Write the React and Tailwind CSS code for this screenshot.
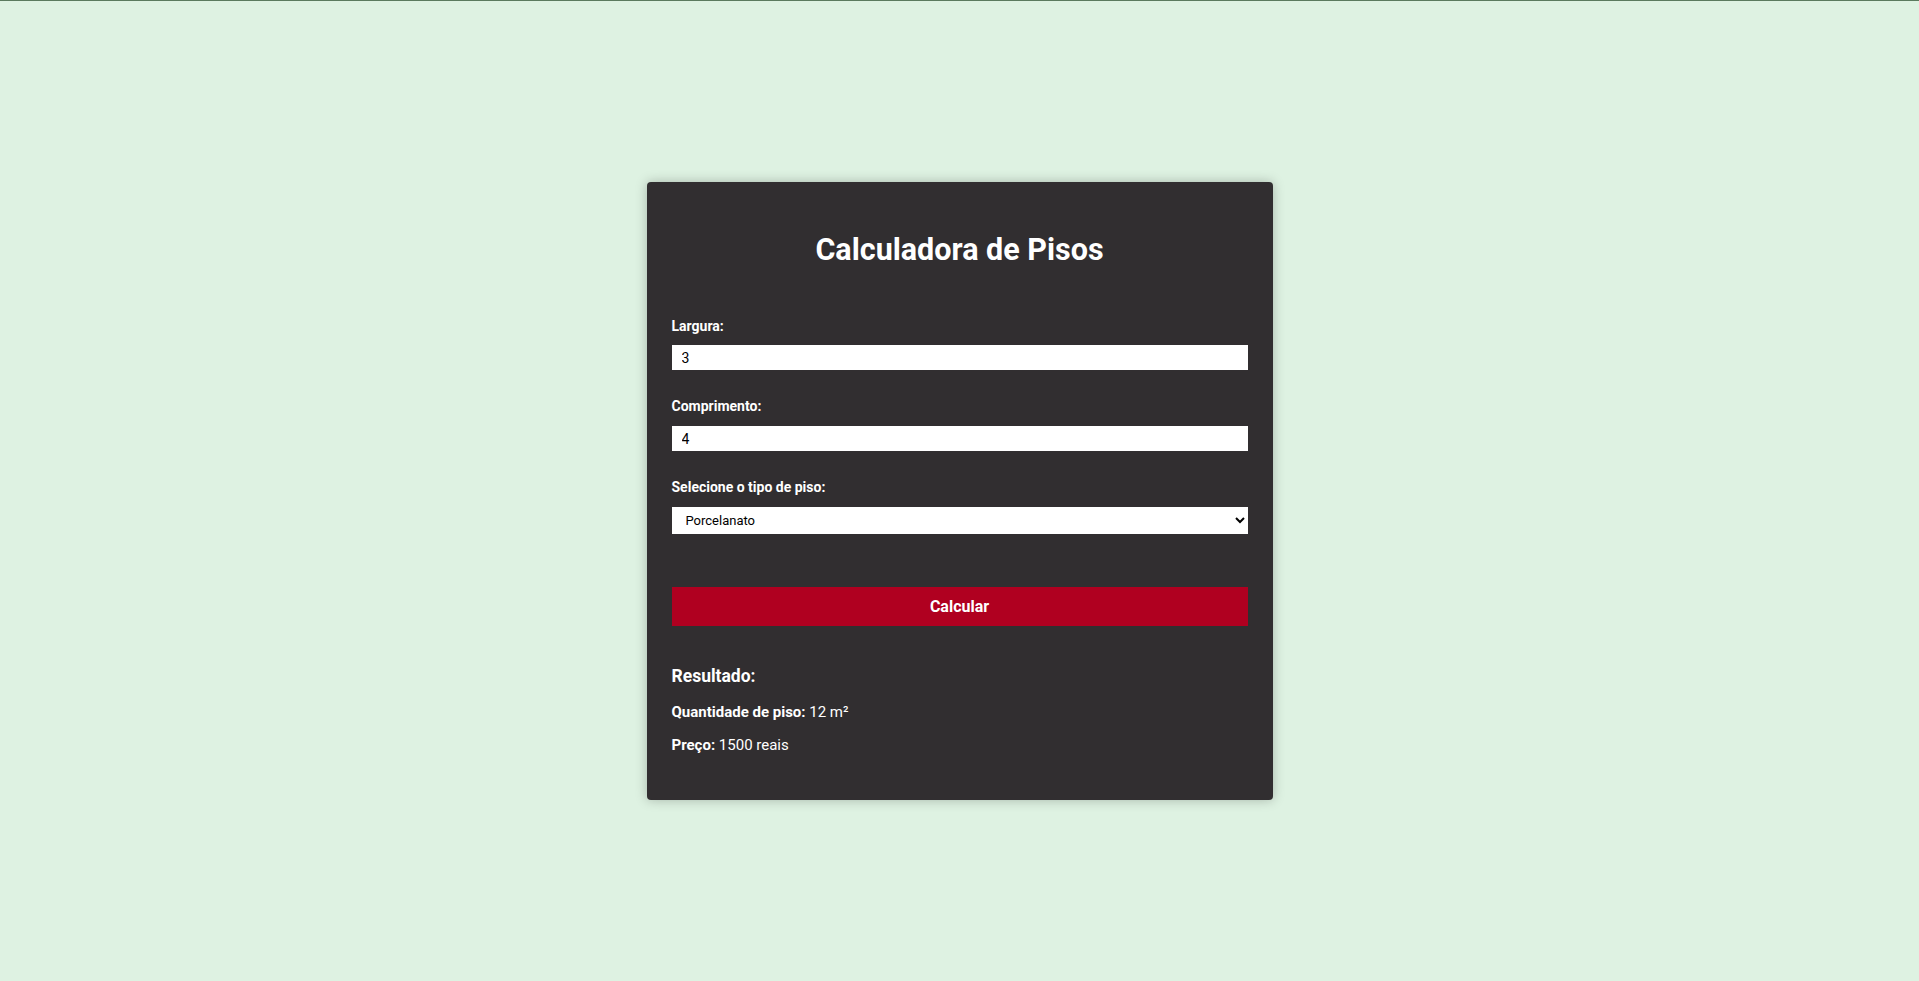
export default function App() {
  return (
    <div className="min-h-screen flex items-center justify-center bg-[#def2e2] border-t border-[#5b7a5e] font-['Roboto',sans-serif]">
      <div className="w-[626px] px-[25px] pt-[25px] pb-[45px] bg-[#312e30] rounded-[4px] shadow-[0_0_12px_rgba(0,0,0,0.25)] text-white">
        <h1 className="mt-[24px] h-[38px] leading-[38px] text-[30.5px] font-bold text-center">Calculadora de Pisos</h1>

        {/* Largura */}
        <label className="mt-[49px] block text-[14px] leading-[16px] font-bold">Largura:</label>
        <input
          type="number"
          defaultValue="3"
          className="mt-[11px] block w-full h-[25px] px-[10px] bg-white text-black text-[14px] outline-none"
        />

        {/* Comprimento */}
        <label className="mt-[28px] block text-[14px] leading-[16px] font-bold">Comprimento:</label>
        <input
          type="number"
          defaultValue="4"
          className="mt-[12px] block w-full h-[25px] px-[10px] bg-white text-black text-[14px] outline-none"
        />

        {/* Tipo de piso */}
        <label className="mt-[28px] block text-[14px] leading-[16px] font-bold">Selecione o tipo de piso:</label>
        <select
          defaultValue="porcelanato"
          className="mt-[12px] block w-full h-[27px] pl-[10px] pr-[4px] bg-white text-black text-[13px] outline-none appearance-auto"
        >
          <option value="porcelanato">Porcelanato</option>
          <option value="ceramica">Cerâmica</option>
          <option value="madeira">Madeira</option>
        </select>

        <button className="mt-[53px] block w-full h-[39px] bg-[#b00020] text-white text-[16px] font-bold">Calcular</button>

        {/* Resultado */}
        <h3 className="mt-[40px] text-[17.5px] leading-[21px] font-bold">Resultado:</h3>
        <p className="mt-[16px] text-[15px] leading-[19px]">
          <strong className="font-bold">Quantidade de piso:</strong> 12 m²
        </p>
        <p className="mt-[14px] text-[15px] leading-[19px]">
          <strong className="font-bold">Preço:</strong> 1500 reais
        </p>
      </div>
    </div>
  );
}
